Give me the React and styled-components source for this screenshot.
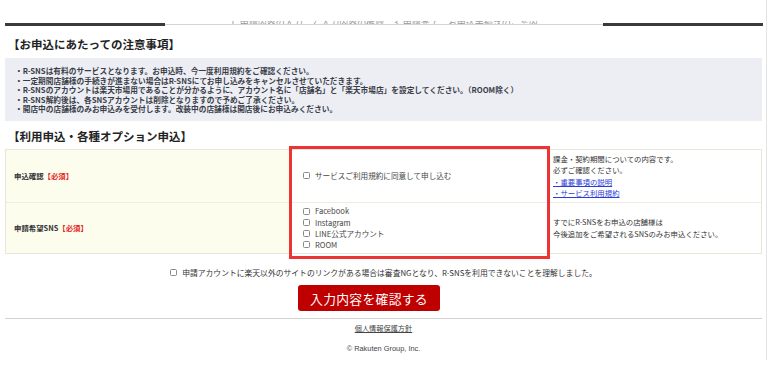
import React from "react";
import styled, { createGlobalStyle } from "styled-components";

const GlobalStyle = createGlobalStyle`
  html, body {
    margin: 0;
    padding: 0;
    background: #fff;
  }
  body {
    font-family: "Noto Sans CJK JP", "Noto Sans", sans-serif;
    color: #333;
  }
`

const Page = styled.div`
  width: 767px;
  box-sizing: border-box;
  border-right: 1px solid #e4e4e4;
  padding: 0 4px 0 5px;
`

const StepBar = styled.div`
  display: flex;
  align-items: flex-end;
  height: 26px;
  margin-right: -1px;
  background: #fff;
`

const StepLine = styled.div`
  flex: 0 0 160px;
  height: 3px;
  background: #3a3a3a;
`

const StepCaption = styled.div`
  flex: 1 1 0;
  min-width: 0;
  height: 3px;
  margin-bottom: 1px;
  overflow: hidden;
  text-align: center;
  font-size: 9px;
  line-height: 3px;
  color: #9a9a9a;
  white-space: nowrap;
  border-bottom: 1px solid #d4d4d4;
`

const Heading = styled.h2`
  margin: ${p => p.$top}px 0 0 3px;
  font-size: 11.5px;
  line-height: 14px;
  font-weight: 700;
  color: #222;
`

const Notice = styled.ul`
  list-style: none;
  margin: 7px 0 0 0;
  padding: 8px 10px 7px 10px;
  background: #eceef4;
  font-size: 7.7px;
  line-height: 9.6px;
  font-weight: 700;
  color: #3a3d48;
`

const Table = styled.div`
  display: grid;
  grid-template-columns: 284px 256px 1fr;
  grid-template-rows: 52px 50px;
  gap: 1px;
  margin-top: 6px;
  border: 1px solid #e9e7d8;
  background: #eeede2;
`

const LabelCell = styled.div`
  display: flex;
  align-items: center;
  padding-left: 8px;
  background: #fdfdee;
  font-size: 7.4px;
  font-weight: 700;
  color: #333;
`

const Required = styled.span`
  color: #e5231b;
`

const InputCell = styled.div`
  grid-column: 2;
  grid-row: ${p => p.$row};
  display: flex;
  flex-direction: column;
  justify-content: center;
  padding-left: 12px;
  background: #fff;
  font-size: 7.6px;
  color: #444;
`

const InfoCell = styled.div`
  display: flex;
  flex-direction: column;
  justify-content: center;
  padding-left: 5px;
  background: #fff;
  font-size: 7.4px;
  line-height: 11.5px;
  color: #333;
`

const InfoLink = styled.a`
  color: #2b3bd6;
  text-decoration: underline;
`

const Highlight = styled.div`
  grid-column: 2;
  grid-row: 1 / span 2;
  margin: -4px -3px -6px -2px;
  border: 3px solid #ec3434;
  pointer-events: none;
  z-index: 1;
`

const CheckRow = styled.label`
  display: flex;
  align-items: center;
  gap: 5px;
  line-height: 11.3px;
  white-space: nowrap;
`

const Box = styled.input.attrs({ type: "checkbox" })`
  appearance: none;
  margin: 0;
  width: 7px;
  height: 7px;
  box-sizing: border-box;
  border: 1px solid #8a8a8a;
  border-radius: 1.5px;
  background: #fff;
  flex: none;
`

const Agreement = styled(CheckRow)`
  justify-content: center;
  margin-top: 13px;
  font-size: 7.8px;
  color: #333;
`

const ButtonRow = styled.div`
  display: flex;
  justify-content: center;
  padding-right: 29px;
  margin-top: 7px;
`

const SubmitButton = styled.button`
  width: 142px;
  height: 26px;
  border: none;
  border-radius: 3px;
  background: #bf0000;
  color: #fff;
  font-family: "Noto Sans CJK JP", sans-serif;
  font-size: 12.8px;
  letter-spacing: 0.3px;
  padding: 0;
`

const Footer = styled.footer`
  position: relative;
  margin-top: 7px;
  height: 42px;
  border-top: 1px solid #d2d2d2;
  display: flex;
  flex-direction: column;
  align-items: center;
  padding-top: 4px;
  box-sizing: border-box;
  font-size: 7.2px;
  color: #444;

  &::before {
    content: "";
    position: absolute;
    inset: 0;
    background: linear-gradient(#fff 15%, #dadada 100%);
    -webkit-mask-image: linear-gradient(to right, transparent 0%, #000 12%, #000 85%, transparent 100%);
    mask-image: linear-gradient(to right, transparent 0%, #000 12%, #000 85%, transparent 100%);
    z-index: -1;
  }
`

const FooterLink = styled.a`
  color: #444;
  text-decoration: underline;
  line-height: 11px;
`

const Copyright = styled.div`
  margin-top: 9px;
  font-family: "Liberation Sans", Arial, sans-serif;
  font-size: 7.4px;
  line-height: 11px;
  color: #444;
`

const notices = [
  "・R-SNSは有料のサービスとなります。お申込時、今一度利用規約をご確認ください。",
  "・一定期間店舗様の手続きが進まない場合はR-SNSにてお申し込みをキャンセルさせていただきます。",
  "・R-SNSのアカウントは楽天市場用であることが分かるように、アカウント名に「店舗名」と「楽天市場店」を設定してください。（ROOM除く）",
  "・R-SNS解約後は、各SNSアカウントは削除となりますので予めご了承ください。",
  "・開店中の店舗様のみお申込みを受付します。改装中の店舗様は開店後にお申込みください。",
];

const snsList = ["Facebook", "Instagram", "LINE公式アカウント", "ROOM"];

export default function App() {
  return (
    <Page>
      <GlobalStyle />
      <StepBar>
        <StepLine />
        <StepCaption>1. 申請内容の入力　2. 入力内容の確認　3. 申請完了　お申込手続きのご案内</StepCaption>
        <StepLine />
      </StepBar>

      <Heading $top={11}>【お申込にあたっての注意事項】</Heading>
      <Notice>
        {notices.map(n => (
          <li key={n}>{n}</li>
        ))}
      </Notice>

      <Heading $top={8}>【利用申込・各種オプション申込】</Heading>
      <Table>
        <LabelCell>
          申込確認<Required>【必須】</Required>
        </LabelCell>
        <InputCell $row={1}>
          <CheckRow>
            <Box />
            サービスご利用規約に同意して申し込む
          </CheckRow>
        </InputCell>
        <InfoCell>
          <span>課金・契約期間についての内容です。</span>
          <span>必ずご確認ください。</span>
          <InfoLink href="#">・重要事項の説明</InfoLink>
          <InfoLink href="#">・サービス利用規約</InfoLink>
        </InfoCell>

        <LabelCell>
          申請希望SNS<Required>【必須】</Required>
        </LabelCell>
        <InputCell $row={2}>
          {snsList.map(s => (
            <CheckRow key={s}>
              <Box />
              {s}
            </CheckRow>
          ))}
        </InputCell>
        <InfoCell>
          <span>すでにR-SNSをお申込の店舗様は</span>
          <span>今後追加をご希望されるSNSのみお申込ください。</span>
        </InfoCell>
        <Highlight />
      </Table>

      <Agreement>
        <Box />
        申請アカウントに楽天以外のサイトのリンクがある場合は審査NGとなり、R-SNSを利用できないことを理解しました。
      </Agreement>

      <ButtonRow>
        <SubmitButton>入力内容を確認する</SubmitButton>
      </ButtonRow>

      <Footer>
        <FooterLink href="#">個人情報保護方針</FooterLink>
        <Copyright>© Rakuten Group, Inc.</Copyright>
      </Footer>
    </Page>
  );
}
